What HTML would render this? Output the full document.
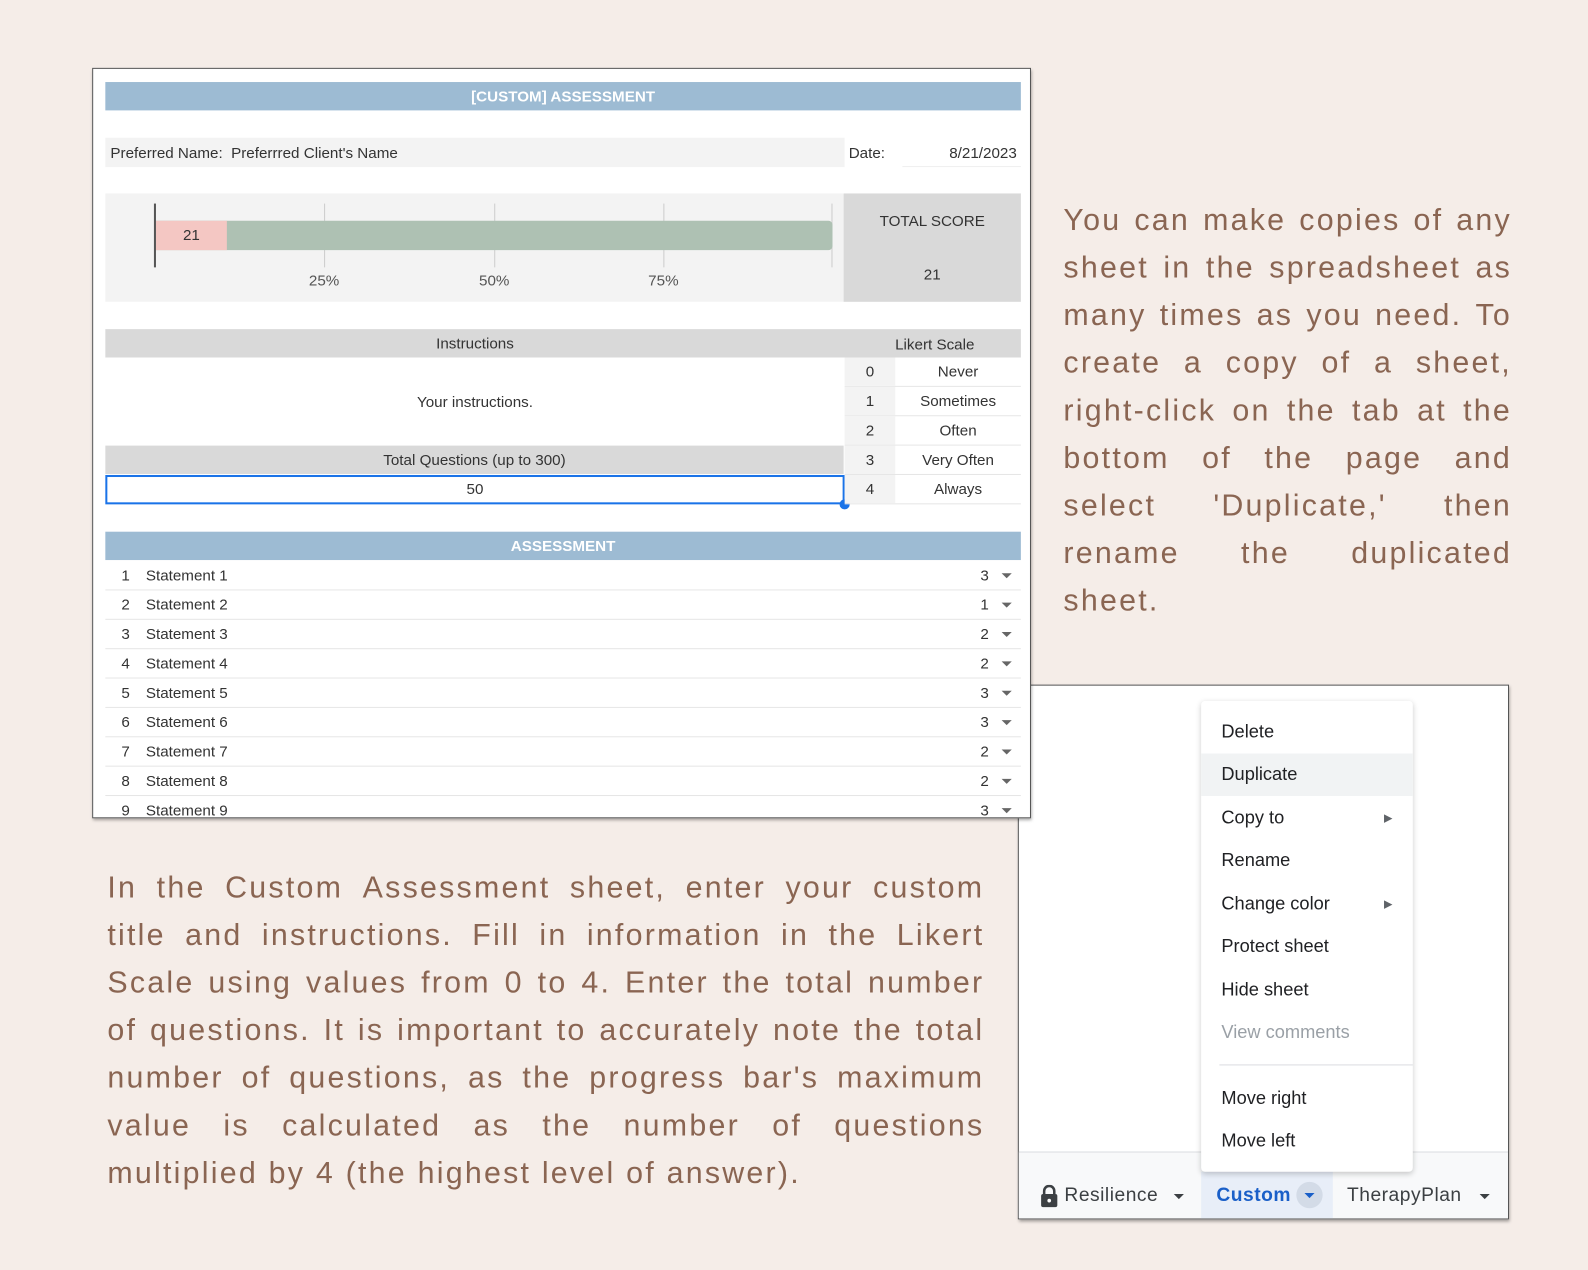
<!DOCTYPE html>
<html><head><meta charset="utf-8"><style>
*{margin:0;padding:0;box-sizing:border-box}
html,body{width:1588px;height:1270px;overflow:hidden;background:#f5ede8}
#w{position:absolute;left:0;top:0;width:1568px;height:1254px;transform:scale(1.01276);transform-origin:0 0;font-family:"Liberation Sans",sans-serif}
.a{position:absolute}
.s{font-size:15px;color:#333}
.c{display:flex;align-items:center;justify-content:center}
.tl{position:absolute;color:#8a6552;font-size:30px;line-height:47px;height:47px;display:flex;justify-content:space-between;letter-spacing:2.2px;white-space:nowrap}
.tl.l{justify-content:flex-start;gap:12px}
.mi{position:absolute;left:20px;font-size:18px;color:#202124}
.arr{position:absolute;right:20px;font-size:11px;color:#5f6368}
.dd{position:absolute;width:0;height:0;border-left:5px solid transparent;border-right:5px solid transparent;border-top:5px solid #666}
</style></head><body><div id="w">

<!-- right panel (below sheet) -->
<div class="a" style="left:1005px;top:676px;width:485px;height:528px;background:#fff;border:1px solid #555;box-shadow:1px 2px 3px rgba(0,0,0,.35)"></div>
<div class="a" style="left:1006px;top:1137px;width:483px;height:1px;background:#dadce0"></div>
<div class="a" style="left:1006px;top:1138px;width:483px;height:65px;background:#f8f9fa"></div>
<div class="a" style="left:1186px;top:1157px;width:130px;height:46px;background:#e8eef8"></div>
<svg class="a" style="left:1027px;top:1170px" width="18" height="22" viewBox="0 0 18 22"><path d="M4 9V6a5 5 0 0 1 10 0v3" fill="none" stroke="#3c4043" stroke-width="2.5"/><rect x="1" y="9" width="16" height="13" rx="2" fill="#3c4043"/><circle cx="9" cy="15.5" r="1.8" fill="#fff"/></svg>
<div class="a" style="left:1051px;top:1170px;font-size:19px;color:#3c4043;letter-spacing:.5px">Resilience</div>
<div class="dd" style="left:1159px;top:1179px;border-top-color:#3c4043"></div>
<div class="a" style="left:1201px;top:1170px;font-size:19px;color:#1a5fc8;font-weight:bold;letter-spacing:.5px">Custom</div>
<div class="a" style="left:1280px;top:1167px;width:26px;height:26px;border-radius:13px;background:#d3dbe7"></div>
<div class="dd" style="left:1288px;top:1178px;border-top-color:#1a5fc8"></div>
<div class="a" style="left:1330px;top:1170px;font-size:19px;color:#3c4043;letter-spacing:.5px">TherapyPlan</div>
<div class="dd" style="left:1461px;top:1179px;border-top-color:#3c4043"></div>

<div class="a" style="left:1186px;top:692px;width:209px;height:465px;background:#fff;border-radius:4px;box-shadow:0 2px 6px rgba(0,0,0,.2)">
 <div class="a" style="left:0;top:52px;width:209px;height:42px;background:#f1f3f4"></div>
 <div class="mi" style="top:20px">Delete</div>
 <div class="mi" style="top:62px">Duplicate</div>
 <div class="mi" style="top:105px">Copy to</div><div class="arr" style="top:109px">&#9654;</div>
 <div class="mi" style="top:147px">Rename</div>
 <div class="mi" style="top:190px">Change color</div><div class="arr" style="top:194px">&#9654;</div>
 <div class="mi" style="top:232px">Protect sheet</div>
 <div class="mi" style="top:275px">Hide sheet</div>
 <div class="mi" style="top:317px;color:#9aa0a6">View comments</div>
 <div class="a" style="left:18px;top:359px;width:191px;height:1px;background:#dadce0"></div>
 <div class="mi" style="top:382px">Move right</div>
 <div class="mi" style="top:424px">Move left</div>
</div>

<!-- sheet panel -->
<div class="a" style="left:91px;top:67px;width:927px;height:741px;background:#fff;border:1px solid #555;box-shadow:1px 2px 3px rgba(0,0,0,.35);overflow:hidden">
<div class="a" style="left:-91px;top:-67px;width:1200px;height:900px">
 <div class="a c" style="left:103px;top:80px;width:904px;height:28px;background:#9dbbd3;color:#fff;font-weight:bold;font-size:15px">[CUSTOM] ASSESSMENT</div>
 <div class="a s" style="left:103px;top:135px;width:730px;height:29px;background:#f3f3f3;padding:7px 5px">Preferred Name:&nbsp; Preferrred Client's Name</div>
 <div class="a s" style="left:837px;top:142px">Date:</div>
 <div class="a s" style="left:890px;top:135px;width:117px;height:29px;border-bottom:1px solid #eee;text-align:right;padding:7px 4px">8/21/2023</div>
 <div class="a" style="left:103px;top:190px;width:729px;height:107px;background:#f3f3f3"></div>
 <div class="a" style="left:832px;top:190px;width:175px;height:107px;background:#d9d9d9"></div>
 <div class="a s" style="left:832px;top:209px;width:175px;text-align:center">TOTAL SCORE</div>
 <div class="a s" style="left:832px;top:262px;width:175px;text-align:center">21</div>
 <div class="a" style="left:319px;top:200px;width:1px;height:63px;background:#ccc"></div>
 <div class="a" style="left:487px;top:200px;width:1px;height:63px;background:#ccc"></div>
 <div class="a" style="left:654px;top:200px;width:1px;height:63px;background:#ccc"></div>
 <div class="a" style="left:820px;top:200px;width:1px;height:63px;background:#ccc"></div>
 <div class="a" style="left:153px;top:217px;width:668px;height:29px;background:#aec1b3;border-radius:0 4px 4px 0"></div>
 <div class="a s c" style="left:153px;top:217px;width:70px;height:29px;background:#f4c7c3">21</div>
 <div class="a" style="left:151px;top:200px;width:2px;height:63px;background:#555"></div>
 <div class="a s" style="left:304px;top:268px;color:#555">25%</div>
 <div class="a s" style="left:472px;top:268px;color:#555">50%</div>
 <div class="a s" style="left:639px;top:268px;color:#555">75%</div>

 <div class="a" style="left:103px;top:324px;width:904px;height:28px;background:#d9d9d9"></div>
 <div class="a s" style="left:103px;top:330px;width:730px;text-align:center">Instructions</div>
 <div class="a s" style="left:833px;top:331px;width:178px;text-align:center">Likert Scale</div>
 <div class="a s" style="left:103px;top:388px;width:730px;text-align:center">Your instructions.</div>
 <div class="a s c" style="left:103px;top:439px;width:729px;height:28px;background:#d9d9d9">Total Questions (up to 300)</div>
 <div class="a s c" style="left:103px;top:468px;width:730px;height:29px;border:2px solid #1a73e8">50</div>
 <div class="a" style="left:828px;top:492px;width:10px;height:10px;border-radius:5px;background:#1a73e8"></div>
 <div class="a" style="left:833px;top:352px;width:174px;height:145px">
  <div class="s" style="display:flex;height:29px;border-bottom:1px solid #e6e6e6"><div class="c" style="width:50px;background:#f3f3f3">0</div><div class="c" style="flex:1">Never</div></div>
  <div class="s" style="display:flex;height:29px;border-bottom:1px solid #e6e6e6"><div class="c" style="width:50px;background:#f3f3f3">1</div><div class="c" style="flex:1">Sometimes</div></div>
  <div class="s" style="display:flex;height:29px;border-bottom:1px solid #e6e6e6"><div class="c" style="width:50px;background:#f3f3f3">2</div><div class="c" style="flex:1">Often</div></div>
  <div class="s" style="display:flex;height:29px;border-bottom:1px solid #e6e6e6"><div class="c" style="width:50px;background:#f3f3f3">3</div><div class="c" style="flex:1">Very Often</div></div>
  <div class="s" style="display:flex;height:29px;border-bottom:1px solid #e6e6e6"><div class="c" style="width:50px;background:#f3f3f3">4</div><div class="c" style="flex:1">Always</div></div>
 </div>

 <div class="a c" style="left:103px;top:524px;width:904px;height:28px;background:#9dbbd3;color:#fff;font-weight:bold;font-size:15px">ASSESSMENT</div>
 <div class="a" style="left:103px;top:553px;width:904px">
  <div class="s" style="display:flex;height:29px;border-bottom:1px solid #e6e6e6;align-items:center;position:relative"><div style="width:40px;text-align:center">1</div><div style="flex:1">Statement 1</div><div style="width:40px">3</div><div class="dd" style="right:9px;top:12px"></div></div>
  <div class="s" style="display:flex;height:29px;border-bottom:1px solid #e6e6e6;align-items:center;position:relative"><div style="width:40px;text-align:center">2</div><div style="flex:1">Statement 2</div><div style="width:40px">1</div><div class="dd" style="right:9px;top:12px"></div></div>
  <div class="s" style="display:flex;height:29px;border-bottom:1px solid #e6e6e6;align-items:center;position:relative"><div style="width:40px;text-align:center">3</div><div style="flex:1">Statement 3</div><div style="width:40px">2</div><div class="dd" style="right:9px;top:12px"></div></div>
  <div class="s" style="display:flex;height:29px;border-bottom:1px solid #e6e6e6;align-items:center;position:relative"><div style="width:40px;text-align:center">4</div><div style="flex:1">Statement 4</div><div style="width:40px">2</div><div class="dd" style="right:9px;top:12px"></div></div>
  <div class="s" style="display:flex;height:29px;border-bottom:1px solid #e6e6e6;align-items:center;position:relative"><div style="width:40px;text-align:center">5</div><div style="flex:1">Statement 5</div><div style="width:40px">3</div><div class="dd" style="right:9px;top:12px"></div></div>
  <div class="s" style="display:flex;height:29px;border-bottom:1px solid #e6e6e6;align-items:center;position:relative"><div style="width:40px;text-align:center">6</div><div style="flex:1">Statement 6</div><div style="width:40px">3</div><div class="dd" style="right:9px;top:12px"></div></div>
  <div class="s" style="display:flex;height:29px;border-bottom:1px solid #e6e6e6;align-items:center;position:relative"><div style="width:40px;text-align:center">7</div><div style="flex:1">Statement 7</div><div style="width:40px">2</div><div class="dd" style="right:9px;top:12px"></div></div>
  <div class="s" style="display:flex;height:29px;border-bottom:1px solid #e6e6e6;align-items:center;position:relative"><div style="width:40px;text-align:center">8</div><div style="flex:1">Statement 8</div><div style="width:40px">2</div><div class="dd" style="right:9px;top:12px"></div></div>
  <div class="s" style="display:flex;height:29px;border-bottom:1px solid #e6e6e6;align-items:center;position:relative"><div style="width:40px;text-align:center">9</div><div style="flex:1">Statement 9</div><div style="width:40px">3</div><div class="dd" style="right:9px;top:12px"></div></div>
 </div>
</div>
</div>

<!-- right text -->
<div class="tl" style="left:1050px;top:194px;width:443px"><span>You</span><span>can</span><span>make</span><span>copies</span><span>of</span><span>any</span></div>
<div class="tl" style="left:1050px;top:241px;width:443px"><span>sheet</span><span>in</span><span>the</span><span>spreadsheet</span><span>as</span></div>
<div class="tl" style="left:1050px;top:288px;width:443px"><span>many</span><span>times</span><span>as</span><span>you</span><span>need.</span><span>To</span></div>
<div class="tl" style="left:1050px;top:335px;width:443px"><span>create</span><span>a</span><span>copy</span><span>of</span><span>a</span><span>sheet,</span></div>
<div class="tl" style="left:1050px;top:382px;width:443px"><span>right-click</span><span>on</span><span>the</span><span>tab</span><span>at</span><span>the</span></div>
<div class="tl" style="left:1050px;top:429px;width:443px"><span>bottom</span><span>of</span><span>the</span><span>page</span><span>and</span></div>
<div class="tl" style="left:1050px;top:476px;width:443px"><span>select</span><span>'Duplicate,'</span><span>then</span></div>
<div class="tl" style="left:1050px;top:523px;width:443px"><span>rename</span><span>the</span><span>duplicated</span></div>
<div class="tl l" style="left:1050px;top:570px;width:443px"><span>sheet.</span></div>

<!-- bottom text -->
<div class="tl" style="left:106px;top:853px;width:866px"><span>In</span><span>the</span><span>Custom</span><span>Assessment</span><span>sheet,</span><span>enter</span><span>your</span><span>custom</span></div>
<div class="tl" style="left:106px;top:900px;width:866px"><span>title</span><span>and</span><span>instructions.</span><span>Fill</span><span>in</span><span>information</span><span>in</span><span>the</span><span>Likert</span></div>
<div class="tl" style="left:106px;top:947px;width:866px"><span>Scale</span><span>using</span><span>values</span><span>from</span><span>0</span><span>to</span><span>4.</span><span>Enter</span><span>the</span><span>total</span><span>number</span></div>
<div class="tl" style="left:106px;top:994px;width:866px"><span>of</span><span>questions.</span><span>It</span><span>is</span><span>important</span><span>to</span><span>accurately</span><span>note</span><span>the</span><span>total</span></div>
<div class="tl" style="left:106px;top:1041px;width:866px"><span>number</span><span>of</span><span>questions,</span><span>as</span><span>the</span><span>progress</span><span>bar's</span><span>maximum</span></div>
<div class="tl" style="left:106px;top:1088px;width:866px"><span>value</span><span>is</span><span>calculated</span><span>as</span><span>the</span><span>number</span><span>of</span><span>questions</span></div>
<div class="tl l" style="left:106px;top:1135px;width:866px">multiplied by 4 (the highest level of answer).</div>

</div></body></html>
